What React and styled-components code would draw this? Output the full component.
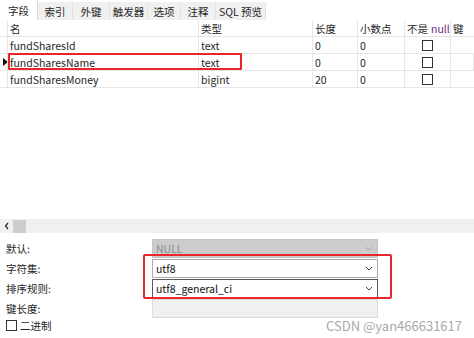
import React from "react";
import styled, { createGlobalStyle } from "styled-components";

const GlobalStyle = createGlobalStyle`
    html, body {
        margin: 0;
        padding: 0;
        background: #ffffff;
    }
    * {
        box-sizing: border-box;
    }
`;

const FONT = `"Noto Sans CJK SC", "Noto Sans", sans-serif`;

const Page = styled.div`
    position: relative;
    width: 474px;
    height: 338px;
    overflow: hidden;
    display: flex;
    flex-direction: column;
    background: #ffffff;
    font-family: ${FONT};
    font-size: 10.5px;
    color: #262626;
`;

const TabBar = styled.div`
    display: flex;
    height: 20px;
    flex-shrink: 0;
    align-items: flex-end;
    background: #ffffff;
`;

const Tab = styled.div`
    width: ${(p) => p.width}px;
    height: ${(p) => (p.active ? 20 : 18)}px;
    display: flex;
    align-items: center;
    justify-content: center;
    background: ${(p) => (p.active ? "#ffffff" : "#f0f0f0")};
    border-right: 1px solid ${(p) => (p.active ? "#d9d9d9" : "#e2e2e2")};
    font-size: 10.5px;
    color: #262626;
    white-space: nowrap;
`;

const columns = "8px 191px 114px 45px 47px 46px 23px";

const Row = styled.div`
    display: grid;
    grid-template-columns: ${columns};
    height: ${(p) => p.h}px;
    border-bottom: 1px solid #e6e6e6;
    position: relative;
`;

const Cell = styled.div`
    display: flex;
    align-items: center;
    justify-content: ${(p) => (p.center ? "center" : "flex-start")};
    padding-left: ${(p) => (p.center ? 0 : 2)}px;
    border-right: 1px solid #e6e6e6;
    white-space: nowrap;
    overflow: hidden;
    &:last-child {
        border-right: none;
    }
`;

const NullTxt = styled.span`
    color: #6b2a7a;
    margin-left: 3px;
`;

const Marker = styled.div`
    width: 0;
    height: 0;
    margin-left: 1px;
    border-top: 4px solid transparent;
    border-bottom: 4px solid transparent;
    border-left: 5px solid #111;
`;

const Check = styled.div`
    width: 11px;
    height: 11px;
    border: 1px solid #333;
    background: #fff;
    flex-shrink: 0;
`;

const RowHighlight = styled.div`
    position: absolute;
    left: 8px;
    top: -1px;
    width: 234px;
    height: 17px;
    border: 2px solid #e8262b;
    border-radius: 1px;
    pointer-events: none;
`;

const Spacer = styled.div`
    flex: 1;
`;

const ScrollBar = styled.div`
    height: 14px;
    flex-shrink: 0;
    display: flex;
    align-items: center;
    background: #f0f0f0;
    padding-left: 4px;
    gap: 4px;
`;

const Thumb = styled.div`
    width: 13px;
    height: 13px;
    background: #cdcdcd;
`;

const Form = styled.div`
    height: 105px;
    flex-shrink: 0;
    display: flex;
    flex-direction: column;
    padding-top: 6px;
    gap: 1px;
`;

const FieldRow = styled.div`
    display: grid;
    grid-template-columns: 152px 226px;
    height: 19px;
    align-items: center;
`;

const Label = styled.div`
    padding-left: 6px;
    font-size: 10.5px;
`;

const Select = styled.div`
    height: 19px;
    display: flex;
    align-items: center;
    justify-content: space-between;
    padding: 0 4px 0 3px;
    background: ${(p) => (p.disabled ? "#cccccc" : p.fill || "#ffffff")};
    border: 1px solid ${(p) => p.line || "#adadad"};
    color: ${(p) => (p.disabled ? "#8c8c8c" : "#111")};
`;

const Group = styled.div`
    position: relative;
    display: flex;
    flex-direction: column;
    gap: 1px;
`;

const GroupHighlight = styled.div`
    position: absolute;
    left: 143px;
    top: -5px;
    width: 249px;
    height: 45px;
    border: 2px solid #e8262b;
    border-radius: 2px;
    pointer-events: none;
`;

const CheckRow = styled.div`
    display: flex;
    align-items: center;
    gap: 3px;
    padding-left: 6px;
    height: 13px;
`;

const Watermark = styled.div`
    position: absolute;
    right: 12px;
    bottom: 3px;
    font-family: ${FONT};
    font-size: 13px;
    color: #a8a8a8;
    white-space: nowrap;
`;

const Chevron = ({ color = "#444" }) => (
    <svg width="8" height="5" viewBox="0 0 8 5">
        <path d="M1 1 L4 4 L7 1" fill="none" stroke={color} strokeWidth="1" />
    </svg>
);

const LeftChevron = () => (
    <svg width="5" height="8" viewBox="0 0 5 8">
        <path d="M4 1 L1.5 4 L4 7" fill="none" stroke="#222" strokeWidth="1.2" />
    </svg>
);

const tabs = [
    { name: "字段", width: 38, active: true },
    { name: "索引", width: 35 },
    { name: "外键", width: 37 },
    { name: "触发器", width: 38 },
    { name: "选项", width: 33 },
    { name: "注释", width: 35 },
    { name: "SQL 预览", width: 50 },
];

const fields = [
    { name: "fundSharesId", type: "text", len: "0", dec: "0" },
    { name: "fundSharesName", type: "text", len: "0", dec: "0", current: true },
    { name: "fundSharesMoney", type: "bigint", len: "20", dec: "0" },
];

const App = () => (
    <Page>
        <GlobalStyle />
        <TabBar>
            {tabs.map((t) => (
                <Tab key={t.name} width={t.width} active={t.active}>
                    {t.name}
                </Tab>
            ))}
        </TabBar>
        <div>
            <Row h={17}>
                <Cell />
                <Cell>名</Cell>
                <Cell>类型</Cell>
                <Cell>长度</Cell>
                <Cell>小数点</Cell>
                <Cell>
                    不是<NullTxt>null</NullTxt>
                </Cell>
                <Cell>键</Cell>
            </Row>
            {fields.map((f) => (
                <Row h={17} key={f.name}>
                    <Cell>{f.current && <Marker />}</Cell>
                    <Cell>{f.name}</Cell>
                    <Cell>{f.type}</Cell>
                    <Cell>{f.len}</Cell>
                    <Cell>{f.dec}</Cell>
                    <Cell center>
                        <Check />
                    </Cell>
                    <Cell />
                    {f.current && <RowHighlight />}
                </Row>
            ))}
        </div>
        <Spacer />
        <ScrollBar>
            <LeftChevron />
            <Thumb />
        </ScrollBar>
        <Form>
            <FieldRow>
                <Label>默认:</Label>
                <Select disabled line="#c4c4c4">
                    NULL
                    <Chevron color="#a6a6a6" />
                </Select>
            </FieldRow>
            <Group>
                <FieldRow>
                    <Label>字符集:</Label>
                    <Select>
                        utf8
                        <Chevron />
                    </Select>
                </FieldRow>
                <FieldRow>
                    <Label>排序规则:</Label>
                    <Select line="#5a5a5a">
                        utf8_general_ci
                        <Chevron />
                    </Select>
                </FieldRow>
                <GroupHighlight />
            </Group>
            <FieldRow>
                <Label>键长度:</Label>
                <Select fill="#f0f0f0" line="#dcdcdc" />
            </FieldRow>
            <CheckRow>
                <Check />
                二进制
            </CheckRow>
        </Form>
        <Watermark>CSDN @yan466631617</Watermark>
    </Page>
);

export default App;
